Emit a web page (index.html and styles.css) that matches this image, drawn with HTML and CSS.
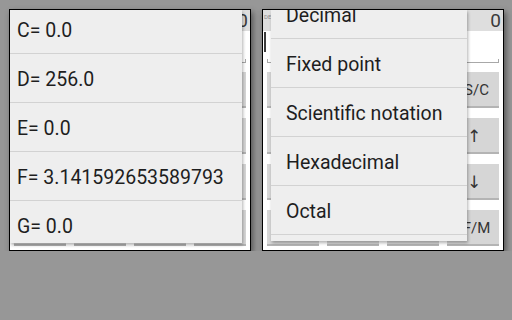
FILE: index.html
```html
<!doctype html>
<html>
<head>
<meta charset="utf-8">
<title>Calculator menus</title>
<link rel="stylesheet" href="styles.css">
</head>
<body>

	<!-- ------------------------------------------------------------------->

	<div class="stage">

		<!--variables screen-->
		<div class="screen">
			<div class="calc">
				<div class="display"><span class="mode"></span><span class="value">0</span></div>
				<div class="entry"><span class="cursor hidden"></span><span class="line"></span></div>
				<div class="keys">
					<div class="key"></div><div class="key"></div><div class="key"></div><div class="key"></div>
					<div class="key"></div><div class="key"></div><div class="key"></div><div class="key"></div>
					<div class="key"></div><div class="key"></div><div class="key"></div><div class="key"></div>
					<div class="key"></div><div class="key"></div><div class="key"></div><div class="key"></div>
				</div>
			</div>
			<ul class="menu menu-vars">
				<li>C= 0.0</li>
				<li>D= 256.0</li>
				<li>E= 0.0</li>
				<li>F= 3.141592653589793</li>
				<li>G= 0.0</li>
			</ul>
		</div>

		<!--number format screen-->
		<div class="screen">
			<div class="calc">
				<div class="display"><span class="mode">DEG</span><span class="value">0</span></div>
				<div class="entry"><span class="cursor"></span><span class="line"></span></div>
				<div class="keys">
					<div class="key"></div><div class="key"></div><div class="key"></div><div class="key label">S/C</div>
					<div class="key"></div><div class="key"></div><div class="key"></div><div class="key arrow">&uarr;</div>
					<div class="key"></div><div class="key"></div><div class="key"></div><div class="key arrow">&darr;</div>
					<div class="key"></div><div class="key"></div><div class="key"></div><div class="key label">F/M</div>
				</div>
			</div>
			<ul class="menu menu-format">
				<li>Decimal</li>
				<li>Fixed point</li>
				<li>Scientific notation</li>
				<li>Hexadecimal</li>
				<li>Octal</li>
				<li></li>
			</ul>
		</div>

	</div>

</body>
</html>
```

FILE: styles.css
```css
/*Page*/
body{
	margin: 0px;
	background: #979797;
	font-family: Roboto, "Liberation Sans", sans-serif;
}

.stage{
	display: flex;
	gap: 11px;
	padding: 9px 0px 0px 9px;
}

/*Screen frame*/
.screen{
	width: 240px;
	height: 240px;
	border: 1px solid #000;
	background: #fff;
	box-shadow: 2px 3px 6px rgba(0,0,0,0.45);
	position: relative;
	overflow: hidden;
}

/*---------------------------------------------*/
/*Calculator underneath*/
.display{
	height: 21px;
	background: #dedede;
	display: flex;
	justify-content: space-between;
	align-items: center;
	padding: 0px 2px 0px 1px;
}

.mode{
	font-size: 6px;
	color: #8a8a8a;
	align-self: flex-start;
	margin-top: 3px;
}

.value{
	font-size: 19px;
	color: #3a3a3a;
}

.entry{
	height: 41px;
	display: flex;
	flex-direction: column;
	padding: 0px 4px 0px 1px;
}

.cursor{
	width: 2px;
	height: 20px;
	margin-top: 1px;
	background: #3c3c3c;
}

.cursor.hidden{
	visibility: hidden;
}

.line{
	height: 3px;
	margin: 7px 0px 0px 3px;
	border: 1px solid #a8a8a8;
	border-top: none;
}

.keys{
	display: grid;
	grid-template-columns: repeat(4, 1fr);
	grid-template-rows: repeat(4, 36px);
	column-gap: 8px;
	row-gap: 10px;
	padding: 0px 4px;
}

.key{
	background: #d6d6d6;
	box-shadow: inset 0px -2px 0px #b4b4b4;
	display: flex;
	align-items: center;
	justify-content: center;
	font-size: 15px;
	color: #333;
}

.key.label{
	padding-left: 7px;
}

.key.arrow{
	font-family: "DejaVu Sans", sans-serif;
	font-size: 17px;
	padding-left: 2px;
}

/*---------------------------------------------*/
/*Popup lists*/
.menu{
	position: absolute;
	top: 0px;
	margin: 0px;
	padding: 0px;
	list-style: none;
	background: #eeeeee;
	box-shadow: 1px 2px 3px rgba(0,0,0,0.3);
	overflow: hidden;
}

.menu li{
	height: 48px;
	padding-top: 2px;
	box-sizing: border-box;
	border-bottom: 1px solid #d2d2d2;
	display: flex;
	align-items: center;
	font-size: 19.5px;
	color: #1e1e1e;
}

.menu li{
	height: 49px;
}

.menu-vars{
	left: 0px;
	width: 232px;
	height: 233px;
}

.menu-vars li{
	padding-left: 7px;
}

.menu-vars li:first-child{
	margin-top: -5px;
}

.menu-format{
	left: 8px;
	width: 196px;
	height: 231px;
}

.menu-format li{
	padding-left: 15px;
}

.menu-format li:first-child{
	margin-top: -20px;
}
```
